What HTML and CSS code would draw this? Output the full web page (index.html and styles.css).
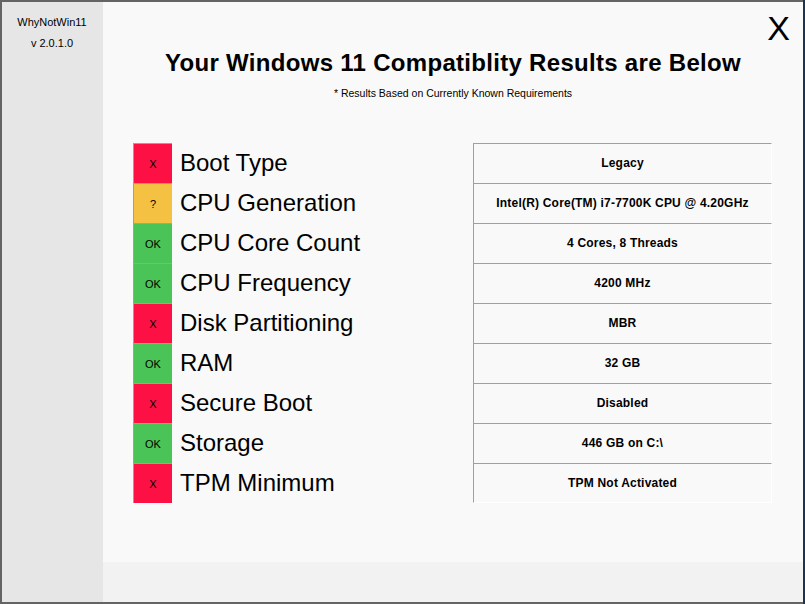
FILE: index.html
```html
<!DOCTYPE html>
<html>
<head>
<meta charset="utf-8">
<link rel="stylesheet" href="styles.css">
</head>
<body>
<div class="window">
  <aside class="sidebar">
    <div class="side-line">WhyNotWin11</div>
    <div class="side-line">v 2.0.1.0</div>
  </aside>
  <main class="main">
    <section class="content">
      <span class="close">X</span>
      <h1 class="title">Your Windows 11 Compatiblity Results are Below</h1>
      <p class="subtitle">* Results Based on Currently Known Requirements</p>
      <div class="rows">
        <div class="row"><div class="status bad">X</div><div class="label">Boot Type</div><div class="value">Legacy</div></div>
        <div class="row"><div class="status warn">?</div><div class="label">CPU Generation</div><div class="value">Intel(R) Core(TM) i7-7700K CPU @ 4.20GHz</div></div>
        <div class="row"><div class="status ok">OK</div><div class="label">CPU Core Count</div><div class="value">4 Cores, 8 Threads</div></div>
        <div class="row"><div class="status ok">OK</div><div class="label">CPU Frequency</div><div class="value">4200 MHz</div></div>
        <div class="row"><div class="status bad">X</div><div class="label">Disk Partitioning</div><div class="value">MBR</div></div>
        <div class="row"><div class="status ok">OK</div><div class="label">RAM</div><div class="value">32 GB</div></div>
        <div class="row"><div class="status bad">X</div><div class="label">Secure Boot</div><div class="value">Disabled</div></div>
        <div class="row"><div class="status ok">OK</div><div class="label">Storage</div><div class="value">446 GB on C:\</div></div>
        <div class="row"><div class="status bad">X</div><div class="label">TPM Minimum</div><div class="value">TPM Not Activated</div></div>
      </div>
    </section>
    <footer class="footer"></footer>
  </main>
</div>
</body>
</html>
```

FILE: styles.css
```css
* { box-sizing: border-box; }
html, body { margin: 0; padding: 0; }
body {
  background: #1b3450;
  width: 805px;
  height: 604px;
  overflow: hidden;
  font-family: "Liberation Sans", Arial, sans-serif;
  color: #000;
}
.window {
  width: 803px;
  height: 604px;
  display: flex;
  border-left: 2px solid #646464;
  border-top: 2px solid #646464;
  border-bottom: 2px solid #646464;
  background: #f9f9f9;
}
.sidebar {
  width: 101px;
  flex: 0 0 101px;
  background: #e6e6e6;
  padding-top: 10px;
  text-align: center;
  font-size: 11px;
}
.side-line {
  line-height: 21px;
  padding-right: 1px;
}
.main {
  flex: 1;
  display: flex;
  flex-direction: column;
}
.content {
  flex: 1;
  position: relative;
  background: #f9f9f9;
  padding-top: 47px;
}
.close {
  position: absolute;
  top: 9px;
  right: 13px;
  font-size: 34px;
  line-height: 1;
}
.title {
  margin: 0;
  font-size: 24px;
  line-height: 28px;
  font-weight: bold;
  text-align: center;
  letter-spacing: 0.3px;
}
.subtitle {
  margin: 9px 0 0;
  font-size: 10.5px;
  line-height: 14px;
  text-align: center;
}
.rows {
  margin-top: 43px;
  padding-left: 30px;
}
.row {
  display: flex;
  height: 40px;
}
.status {
  flex: 0 0 39px;
  height: 40px;
  border-top: 1px solid #a0a0a0;
  border-left: 1px solid #a0a0a0;
  display: flex;
  align-items: center;
  justify-content: center;
  font-size: 11px;
}
.bad { background: #fd1043; }
.warn { background: #f5c143; }
.ok { background: #4bc457; }
.label {
  flex: 0 0 301px;
  display: flex;
  align-items: center;
  padding-left: 8px;
  padding-bottom: 1px;
  font-size: 24px;
}
.value {
  flex: 0 0 299px;
  height: 40px;
  border-top: 1px solid #a0a0a0;
  border-left: 1px solid #a0a0a0;
  border-right: 1px solid #ffffff;
  display: flex;
  align-items: center;
  justify-content: center;
  padding-bottom: 1px;
  font-size: 12px;
  letter-spacing: 0.2px;
  font-weight: bold;
}
.row:last-child .value {
  border-bottom: 1px solid #ffffff;
}
.footer {
  height: 40px;
  flex: 0 0 40px;
  background: #f2f2f2;
}
```
